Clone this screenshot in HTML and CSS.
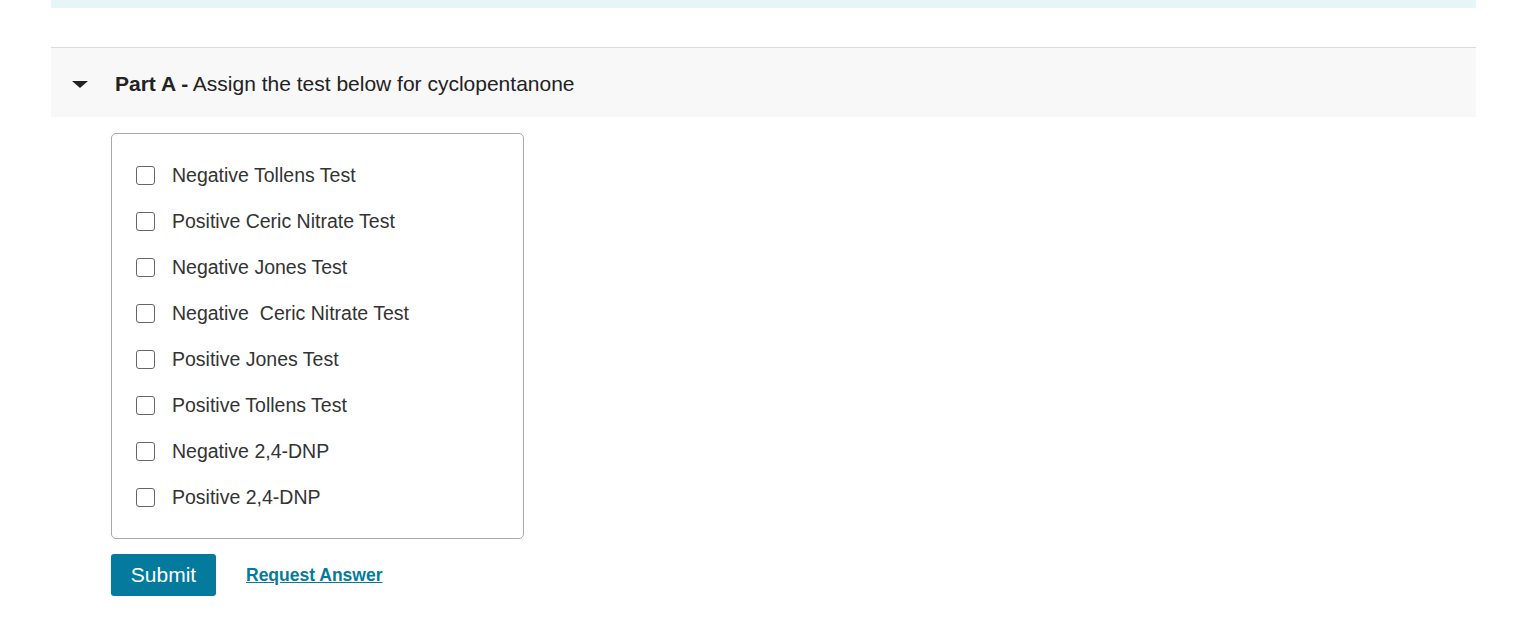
FILE: index.html
```html
<!DOCTYPE html>
<html>
<head>
<meta charset="utf-8">
<link rel="stylesheet" href="styles.css">
</head>
<body>
<div class="page">
  <div class="band"></div>
  <section class="part">
    <div class="part-header">
      <span class="caret"></span>
      <h2 class="part-title"><strong>Part A -</strong> Assign the test below for cyclopentanone</h2>
    </div>
    <div class="part-body">
      <div class="choices">
        <label class="choice"><input type="checkbox"><span>Negative Tollens Test</span></label>
        <label class="choice"><input type="checkbox"><span>Positive Ceric Nitrate Test</span></label>
        <label class="choice"><input type="checkbox"><span>Negative Jones Test</span></label>
        <label class="choice"><input type="checkbox"><span>Negative&nbsp; Ceric Nitrate Test</span></label>
        <label class="choice"><input type="checkbox"><span>Positive Jones Test</span></label>
        <label class="choice"><input type="checkbox"><span>Positive Tollens Test</span></label>
        <label class="choice"><input type="checkbox"><span>Negative 2,4-DNP</span></label>
        <label class="choice"><input type="checkbox"><span>Positive 2,4-DNP</span></label>
      </div>
      <div class="actions">
        <button class="submit">Submit</button>
        <a class="request" href="#">Request Answer</a>
      </div>
    </div>
  </section>
</div>
</body>
</html>
```
FILE: styles.css
```css
* { box-sizing: border-box; }
html, body { margin: 0; padding: 0; background: #fff; }
body { font-family: "Liberation Sans", Arial, sans-serif; color: #333; }
.page { width: 1425px; margin-left: 51px; }
.band { height: 8px; background: #e6f6f6; }
.part { margin-top: 39px; }
.part-header {
  display: flex; align-items: center;
  height: 70px;
  padding-top: 3px;
  border-top: 1px solid #dcdcdc;
  background: #f8f8f8;
}
.caret {
  width: 0; height: 0;
  margin-left: 21px; margin-right: 27px;
  border-left: 8px solid transparent;
  border-right: 8px solid transparent;
  border-top: 7px solid #222;
}
.part-title { margin: 0; font-size: 21px; font-weight: normal; color: #222; }
.part-title strong { font-weight: bold; }
.part-body { padding: 16px 0 0 60px; }
.choices {
  width: 413px;
  border: 1px solid #aaa;
  border-radius: 5px;
  padding: 18px 0 18px 24px;
  display: flex; flex-direction: column;
}
.choice {
  display: flex; align-items: center;
  height: 46px;
  font-size: 19.5px; color: #333;
}
.choice input {
  appearance: none; -webkit-appearance: none;
  width: 19px; height: 19px; margin: 0 17px 0 0;
  border: 1px solid #666; border-radius: 3px; background: #fff;
}
.actions { display: flex; align-items: center; margin-top: 15px; gap: 30px; }
.submit {
  width: 105px; height: 42px;
  background: #047a9c; color: #fff; border: none; border-radius: 3px;
  font-family: "Liberation Sans", Arial, sans-serif; font-size: 21px;
}
.request { color: #047a9c; font-weight: bold; font-size: 17.5px; text-decoration: underline; }
```
